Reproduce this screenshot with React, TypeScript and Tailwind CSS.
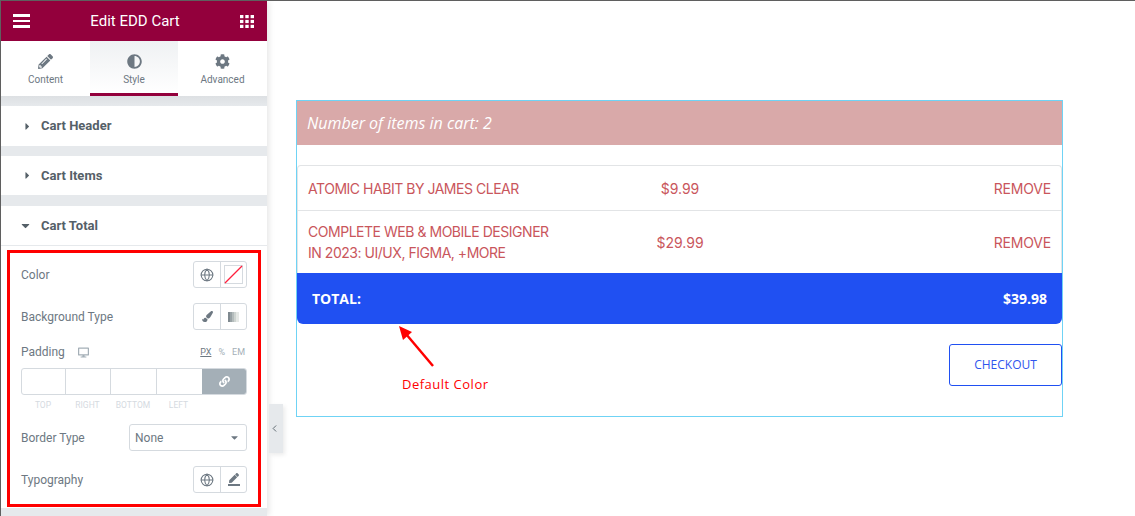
import { FaAdjust, FaCaretDown, FaCaretRight, FaCog, FaDesktop, FaLink, FaPaintBrush, FaPen, FaPencilAlt } from "react-icons/fa";
import { ChevronLeft, Globe } from "lucide-react";

function Section({ title, open, h }: { title: string; open?: boolean; h: string }) {
  return (
    <div className={`${h} shrink-0 bg-white flex items-center text-[#556068]`}>
      <span className={open ? "w-[40px] pl-[18px] text-[13px]" : "w-[40px] pl-[21px] text-[11px]"}>
        {open ? <FaCaretDown /> : <FaCaretRight />}
      </span>
      <span className="text-[13px] font-bold">{title}</span>
    </div>
  );
}

function Row({ label, h, children }: { label: string; h: string; children: React.ReactNode }) {
  return (
    <div className={`flex items-center justify-between shrink-0 ${h}`}>
      <span className="text-[12px] text-[#6d7882]">{label}</span>
      {children}
    </div>
  );
}

function Pair({ left, right }: { left: React.ReactNode; right: React.ReactNode }) {
  return (
    <div className="flex w-[54px] h-[27px] border border-[#d5dadf] rounded-[3px] text-[#6d7882]">
      <div className="w-[27px] flex items-center justify-center border-r border-[#d5dadf]">{left}</div>
      <div className="flex-1 flex items-center justify-center">{right}</div>
    </div>
  );
}

function Sidebar() {
  return (
    <aside className="w-[266px] shrink-0 h-[515px] bg-[#e6e9ec] shadow-[2px_0_6px_rgba(0,0,0,0.1)] flex flex-col overflow-hidden">
      <header className="h-[40px] shrink-0 bg-[#93003c] text-white flex items-center justify-between pl-[12px] pr-[13px]">
        <div className="flex flex-col gap-[3px] w-[17px]">
          <span className="h-[2.5px] bg-white" />
          <span className="h-[2.5px] bg-white" />
          <span className="h-[2.5px] bg-white" />
        </div>
        <span className="text-[15px] font-['Roboto',sans-serif]">Edit EDD Cart</span>
        <svg width="14" height="13" viewBox="0 0 14 13" fill="#fff">
          <rect x="0" y="0" width="3.4" height="3.2" />
          <rect x="5.3" y="0" width="3.4" height="3.2" />
          <rect x="10.6" y="0" width="3.4" height="3.2" />
          <rect x="0" y="4.9" width="3.4" height="3.2" />
          <rect x="5.3" y="4.9" width="3.4" height="3.2" />
          <rect x="10.6" y="4.9" width="3.4" height="3.2" />
          <rect x="0" y="9.8" width="3.4" height="3.2" />
          <rect x="5.3" y="9.8" width="3.4" height="3.2" />
          <rect x="10.6" y="9.8" width="3.4" height="3.2" />
        </svg>
      </header>

      <div className="flex h-[55px] shrink-0 bg-white text-[#6d7882]">
        <div className="w-[89px] flex flex-col items-center pt-[13px]">
          <FaPencilAlt className="text-[15px]" />
          <span className="text-[10px] mt-[4px] leading-[14px]">Content</span>
        </div>
        <div className="w-[88px] flex flex-col items-center pt-[13px] bg-gradient-to-b from-[#eff1f3] to-white border-b-[3px] border-[#93003c]">
          <FaAdjust className="text-[15px]" />
          <span className="text-[10px] mt-[4px] leading-[14px]">Style</span>
        </div>
        <div className="flex-1 flex flex-col items-center pt-[13px]">
          <FaCog className="text-[15px]" />
          <span className="text-[10px] mt-[4px] leading-[14px]">Advanced</span>
        </div>
      </div>

      <div className="h-[10px] shrink-0 bg-gradient-to-b from-[#dde0e3] to-[#e6e9ec]" />
      <Section title="Cart Header" h="h-[40px]" />
      <div className="h-[10px] shrink-0" />
      <Section title="Cart Items" h="h-[39px]" />
      <div className="h-[11px] shrink-0" />
      <Section title="Cart Total" open h="h-[39px]" />

      <div className="bg-white h-[263px] shrink-0 border-t border-[#e6e9ec] pt-[4px] pl-[6px] pr-[6px]">
        <div className="border-[3px] border-[#ff0000] h-[257px] px-[11px] flex flex-col">
          <Row label="Color" h="h-[41px] mt-[1px]">
            <Pair
              left={<Globe size={14} strokeWidth={1.8} />}
              right={
                <svg width="19" height="19" viewBox="0 0 19 19">
                  <rect x="0.5" y="0.5" width="18" height="18" fill="#fff" stroke="#d5dadf" />
                  <line x1="1" y1="18" x2="18" y2="1" stroke="#ff1f3d" strokeWidth="1.2" />
                </svg>
              }
            />
          </Row>
          <Row label="Background Type" h="h-[41px] mt-[1px]">
            <Pair
              left={<FaPaintBrush className="text-[11px]" />}
              right={
                <span className="flex h-[10px]">
                  <span className="w-[2px] bg-[#7f898f]" />
                  <span className="w-[2px] bg-[#98a2a5]" />
                  <span className="w-[2px] bg-[#b4bcbc]" />
                  <span className="w-[2px] bg-[#ced4d1]" />
                  <span className="w-[3px] bg-[#e6e9e6]" />
                </span>
              }
            />
          </Row>
          <div className="flex items-center justify-between h-[30px] shrink-0">
            <div className="flex items-center gap-[13px]">
              <span className="text-[12px] text-[#6d7882]">Padding</span>
              <FaDesktop className="text-[11px] text-[#a4afb7]" />
            </div>
            <div className="flex items-center gap-[7px] text-[9px] pt-[1px] pr-[2px]">
              <span className="underline text-[#6d7882]">PX</span>
              <span className="text-[#a4afb7]">%</span>
              <span className="text-[#a4afb7]">EM</span>
            </div>
          </div>
          <div className="flex h-[27px] shrink-0 border border-[#d5dadf] rounded-[3px] mt-[1px] overflow-hidden">
            <div className="w-[44px] border-r border-[#d5dadf]" />
            <div className="w-[45px] border-r border-[#d5dadf]" />
            <div className="w-[46px] border-r border-[#d5dadf]" />
            <div className="w-[45px]" />
            <div className="flex-1 bg-[#a4afb7] flex items-center justify-center text-white text-[11px]">
              <FaLink />
            </div>
          </div>
          <div className="flex mt-[4px] text-[8.5px] leading-[12px] text-[#d5dadf]">
            <span className="w-[44px] text-center">TOP</span>
            <span className="w-[45px] text-center">RIGHT</span>
            <span className="w-[46px] text-center">BOTTOM</span>
            <span className="w-[45px] text-center">LEFT</span>
          </div>
          <Row label="Border Type" h="h-[27px] mt-[13px]">
            <div className="w-[118px] h-[27px] border border-[#d5dadf] rounded-[3px] flex items-center justify-between pl-[5px] pr-[6px] text-[12px] text-[#6d7882]">
              <span>None</span>
              <FaCaretDown className="text-[11px]" />
            </div>
          </Row>
          <Row label="Typography" h="h-[27px] mt-[15px]">
            <Pair
              left={<Globe size={14} strokeWidth={1.8} />}
              right={
                <span className="flex flex-col items-center">
                  <FaPen className="text-[10px]" />
                  <span className="w-[12px] h-[1.5px] bg-[#6d7882] mt-[1px]" />
                </span>
              }
            />
          </Row>
        </div>
      </div>
    </aside>
  );
}

function CartRow({ name, price, h }: { name: React.ReactNode; price: string; h: string }) {
  return (
    <div className={`flex items-center ${h} text-[14px] leading-[21px] text-[#c9565c] font-['Inter',sans-serif]`}>
      <div className="w-[294px] pl-[10px] tracking-[-0.47px]">{name}</div>
      <div className="w-[176px] text-center">{price}</div>
      <div className="flex-1 text-right pr-[10px] tracking-[-0.2px]">REMOVE</div>
    </div>
  );
}

function Cart() {
  return (
    <div className="relative w-[767px] h-[317px] border border-[#6fd3f5] flex flex-col">
      <div className="h-[44px] bg-[#d9a9a9] flex items-center pl-[10px] text-[16px] italic text-white font-['Open_Sans',sans-serif]">
        Number of items in cart: 2
      </div>
      <div className="mt-[20px] border-t border-x border-[#e2e4e6] rounded-t-[4px]">
        <CartRow name="ATOMIC HABIT BY JAMES CLEAR" price="$9.99" h="h-[45px] border-b border-[#e2e4e6]" />
        <CartRow
          name={
            <>
              COMPLETE WEB &amp; MOBILE DESIGNER
              <br />
              IN 2023: UI/UX, FIGMA, +MORE
            </>
          }
          price="$29.99"
          h="h-[62px]"
        />
      </div>
      <div className="h-[51px] bg-[#2050f2] rounded-b-[6px] flex items-center justify-between px-[15px] text-white font-bold text-[14px] font-['Open_Sans',sans-serif]">
        <span>TOTAL:</span>
        <span>$39.98</span>
      </div>
      <div className="flex justify-end mt-[20px]">
        <div className="w-[113px] h-[42px] border border-[#2050f2] rounded-[3px] flex items-center justify-center text-[12px] text-[#2f55ee] font-['Open_Sans',sans-serif]">
          CHECKOUT
        </div>
      </div>

      {/* annotation */}
      <svg className="absolute left-[100px] top-[224px]" width="40" height="46" viewBox="0 0 40 46">
        <line x1="36" y1="41" x2="9" y2="9" stroke="#ff0000" strokeWidth="2.5" />
        <polygon points="2,1 15,7 6,15" fill="#ff0000" />
      </svg>
      <span className="absolute left-[105px] top-[274px] text-[13px] leading-[18px] tracking-[0.5px] text-[#ff0000] font-['Open_Sans',sans-serif]">
        Default Color
      </span>
    </div>
  );
}

export default function App() {
  return (
    <div className="relative w-[1135px] h-[516px] overflow-hidden bg-white border-t border-l border-[#5f5f5f] font-['Roboto',sans-serif] flex">
      <Sidebar />
      <main className="pl-[29px] pt-[99px]">
        <Cart />
      </main>
      <div className="absolute left-[268px] top-[403px] w-[14px] h-[49px] bg-[#e6e9ec] shadow-[2px_2px_4px_rgba(0,0,0,0.08)] flex items-center justify-center pr-[3px] text-[#556068]">
        <ChevronLeft size={13} strokeWidth={2} />
      </div>
    </div>
  );
}
